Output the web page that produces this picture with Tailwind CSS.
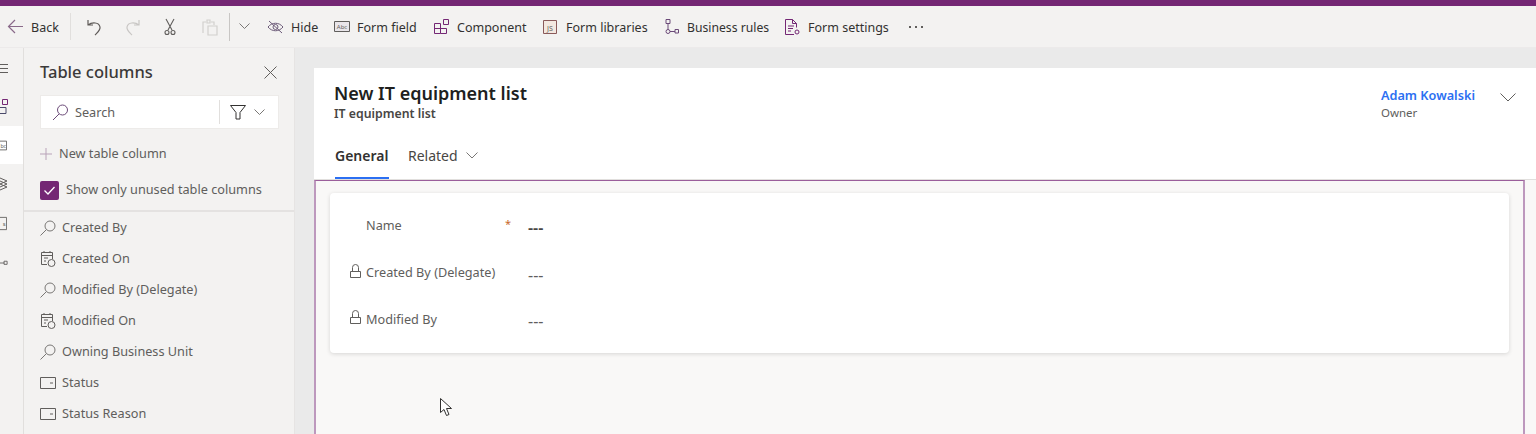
<!DOCTYPE html>
<html lang="en">
<head>
  <meta charset="UTF-8" />
  <title>New IT equipment list</title>
  <script src="https://cdn.jsdelivr.net/npm/@tailwindcss/browser@4"></script>
</head>
<body class="h-[434px] overflow-hidden bg-[#f3f2f1] font-['Noto_Sans',sans-serif] text-[12.7px] text-[#323130]">
  <div class="h-[6px] bg-[#742774]"></div>

  <!-- command bar -->
  <div class="h-[42px] flex items-center bg-[#f3f2f1] border-b border-[#eceaea] text-[12.5px] whitespace-nowrap">
    <svg class="ml-[7px] w-[17px] h-[17px]" viewBox="0 0 17 17" fill="none" stroke="#8a6a8a" stroke-width="1.2"><path d="M16 8.500H1.500M8 2L1.500 8.500 8 15"/></svg>
    <span class="ml-[7px] w-[27px] pt-[3px]">Back</span>
    <div class="ml-[12px] w-px h-[27px] bg-[#e1dfdd]"></div>
    <svg class="ml-[15px] w-[16px] h-[18px]" viewBox="0 0 16 18" fill="none" stroke="#5e5a58" stroke-width="1.2"><path d="M2 2v5h5M2 7c4-3 11-3 12 2 .6 3-2 5-5 8"/></svg>
    <svg class="ml-[23px] w-[16px] h-[18px]" viewBox="0 0 16 18" fill="none" stroke="#c8c6c4" stroke-width="1.2"><path d="M14 2v5H9M14 7C10 4 3 4 2 9c-.6 3 2 5 5 8"/></svg>
    <svg class="ml-[23px] w-[12px] h-[18px]" viewBox="0 0 12 18" fill="none" stroke="#605e5c" stroke-width="1.1"><path d="M2 1l6 11M10 1L4 12"/><circle cx="3" cy="14.500" r="2"/><circle cx="9" cy="14.500" r="2"/></svg>
    <svg class="ml-[26px] w-[16px] h-[18px]" viewBox="0 0 16 18" fill="none" stroke="#d2d0ce" stroke-width="1.2"><path d="M1 15V4h3M12 7V4H9M5 2h3v3H5zM6 8h9v9H6z"/></svg>
    <div class="ml-[11px] w-px h-[28px] bg-[#c8c6c4]"></div>
    <svg class="ml-[9px] w-[11px] h-[7px]" viewBox="0 0 11 7" fill="none" stroke="#797775" stroke-width="1"><path d="M.5.500l5 5 5-5"/></svg>

    <svg class="ml-[17px] w-[17px] h-[14px]" viewBox="0 0 17 14" fill="none" stroke="#6b5a78" stroke-width="1"><path d="M1 7c4-5 11-5 15 0-4 5-11 5-15 0zM2 1l13 12"/><circle cx="8.500" cy="7" r="2.500"/></svg>
    <span class="ml-[7px] w-[28px] pt-[3px]">Hide</span>
    <svg class="ml-[15px] w-[16px] h-[11px]" viewBox="0 0 16 11" fill="#e9e6ea" stroke="#605e5c" stroke-width="1"><path d="M.5.500h15v10H.5z"/><text x="8" y="7.500" font-size="6" text-anchor="middle" stroke="none" fill="#605e5c" font-family="Noto Sans">Abc</text></svg>
    <span class="ml-[7px] w-[61px] pt-[3px]">Form field</span>
    <svg class="ml-[16px] w-[15px] h-[15px]" viewBox="0 0 15 15" fill="none" stroke="#742774" stroke-width="1"><path d="M.5 4.500h6v10h-6zM.5 9.500h12v5h-6M9.500.500h5v5h-5z"/></svg>
    <span class="ml-[8px] w-[70px] pt-[3px]">Component</span>
    <svg class="ml-[16px] w-[14px] h-[14px]" viewBox="0 0 14 14" fill="#f3e8e0" stroke="#8a5a5a" stroke-width="1"><path d="M.5.500h13v13H.5z"/><text x="7" y="11" font-size="7" text-anchor="middle" stroke="none" fill="#605e5c" font-family="Noto Sans">JS</text></svg>
    <span class="ml-[9px] w-[82px] pt-[3px]">Form libraries</span>
    <svg class="ml-[16px] w-[15px] h-[15px]" viewBox="0 0 15 15" fill="none" stroke="#6b4a78" stroke-width="1"><path d="M2 .5h4v4H2zM4 4.500v6M6 12.500h5M11 10.500h3.500v3.500H11z"/><circle cx="4" cy="12.500" r="2"/></svg>
    <span class="ml-[8px] w-[82px] pt-[3px] text-[12.2px]">Business rules</span>
    <svg class="ml-[16px] w-[15px] h-[16px]" viewBox="0 0 15 16" fill="none" stroke="#742774" stroke-width="1"><path d="M9 15.500H.5V.500h7l4 4v4M7.500.500v4h4M3 7h6M3 9.500h5M3 12h3"/><circle cx="12" cy="13" r="2"/></svg>
    <span class="ml-[8px] w-[81px] pt-[3px]">Form settings</span>
    <span class="ml-[20px] flex gap-[4px] items-center">
      <i class="w-[2px] h-[2px] bg-[#605e5c]"></i><i class="w-[2px] h-[2px] bg-[#605e5c]"></i><i class="w-[2px] h-[2px] bg-[#605e5c]"></i>
    </span>
  </div>

  <div class="flex h-[386px]">
    <!-- rail, clipped at the left edge of the shot -->
    <div class="w-[24px] shrink-0 border-r border-[#e1dfdd] flex flex-col items-end">
      <div class="h-[39px] w-full flex items-center justify-end pr-[15px]">
        <svg class="w-[8px] h-[9px] mt-[2px]" viewBox="0 0 8 9" stroke="#605e5c"><path d="M0 .5h8M0 4.500h8M0 8.500h8"/></svg>
      </div>
      <div class="h-[39px] w-full flex items-center pr-[15px] justify-end">
        <svg class="w-[8px] h-[15px]" viewBox="0 0 8 15" fill="none" stroke="#4a4a6a"><path d="M0 8.500h6v6H0"/><path d="M2.500 .5h5v5h-5z" stroke="#742774"/></svg>
      </div>
      <div class="h-[38px] w-full bg-white flex items-center justify-end pr-[16px]">
        <svg class="w-[8px] h-[11px]" viewBox="0 0 8 11" fill="none" stroke="#605e5c"><path d="M0 .5h7.500v10H0"/><text x="7" y="8" font-size="6" text-anchor="end" stroke="none" fill="#605e5c" font-family="Noto Sans">bc</text></svg>
      </div>
      <div class="h-[40px] w-full flex items-center justify-end pr-[15px]">
        <svg class="w-[8px] h-[14px]" viewBox="0 0 8 14" fill="none" stroke="#605e5c"><path d="M0 1l7 3-7 3M0 4l7 3-7 3M0 7l7 3-7 3"/></svg>
      </div>
      <div class="h-[38px] w-full flex items-center justify-end pr-[16px]">
        <svg class="w-[8px] h-[15px]" viewBox="0 0 8 15" fill="none" stroke="#605e5c"><path d="M0 .5h7.500v14H0"/><text x="6.500" y="10" font-size="7" text-anchor="end" stroke="none" fill="#605e5c" font-family="Noto Sans">s</text></svg>
      </div>
      <div class="h-[42px] w-full flex items-center justify-end pr-[15px]">
        <svg class="w-[9px] h-[6px]" viewBox="0 0 9 6" fill="none" stroke="#605e5c"><path d="M0 3h5"/><path d="M4.500 1h3.500v3.500H4.500z"/></svg>
      </div>
    </div>

    <!-- table columns panel -->
    <div class="w-[271px] shrink-0 border-r border-[#e6e4e3] bg-[#f3f2f1]">
      <div class="h-[47px] pt-[1px] pl-[16px] pr-[17px] flex items-center justify-between">
        <span class="text-[16.500px] font-medium text-[#3b3a39]">Table columns</span>
        <svg class="w-[13px] h-[13px]" viewBox="0 0 13 13" stroke="#605e5c"><path d="M.5.500l12 12M12.500.500l-12 12"/></svg>
      </div>
      <div class="ml-[16px] w-[239px] h-[34px] bg-white border border-[#edebe9] flex items-center">
        <svg class="ml-[11px] w-[17px] h-[17px]" viewBox="0 0 17 17" fill="none" stroke="#6b4a78"><circle cx="10.500" cy="6" r="5"/><path d="M7 10l-6 6"/></svg>
        <span class="ml-[6px] w-[41px] pt-[2px] text-[#605e5c]">Search</span>
        <div class="ml-[103px] w-px h-[24px] bg-[#e1dfdd]"></div>
        <svg class="ml-[10px] w-[16px] h-[15px]" viewBox="0 0 16 15" fill="none" stroke="#323130"><path d="M.5.500h15L10 7.500v6.500H6V7.500z"/></svg>
        <svg class="ml-[8px] w-[11px] h-[7px]" viewBox="0 0 11 7" fill="none" stroke="#797775"><path d="M.5.500l5 5 5-5"/></svg>
      </div>
      <div class="ml-[16px] mt-[12px] h-[26px] flex items-center text-[#605e5c]">
        <svg class="w-[12px] h-[12px]" viewBox="0 0 12 12" stroke="#b9a3b9"><path d="M6 0v12M0 6h12"/></svg>
        <span class="ml-[7px]">New table column</span>
      </div>
      <div class="ml-[16px] mt-[12px] h-[22px] flex items-center text-[#605e5c]">
        <span class="w-[19px] h-[19px] rounded-[2px] bg-[#742774] flex items-center justify-center">
          <svg class="w-[11px] h-[9px]" viewBox="0 0 11 9" fill="none" stroke="#fff" stroke-width="1.300"><path d="M.5 4.500L4 8l6.500-7"/></svg>
        </span>
        <span class="ml-[7px]">Show only unused table columns</span>
      </div>
      <div class="mt-[9px] border-t-2 border-[#e4e2e1]">
        <div class="h-[31px] pl-[16px] flex items-center text-[#605e5c]">
          <svg class="w-[16px] h-[16px] shrink-0" viewBox="0 0 16 16" fill="none" stroke="#797775"><circle cx="10" cy="6" r="5"/><path d="M6.500 9.500L.5 15.500"/></svg>
          <span class="ml-[6px]">Created By</span>
        </div>
        <div class="h-[31px] pl-[16px] flex items-center text-[#605e5c]">
          <svg class="w-[16px] h-[16px] shrink-0" viewBox="0 0 16 16" fill="none" stroke="#605e5c"><path d="M7 13.500H1.500v-12h11V8M1.500 4.500h11M4 0v2M10 0v2M4 7h4M4 10h2"/><circle cx="11.500" cy="12" r="3.500"/></svg>
          <span class="ml-[6px]">Created On</span>
        </div>
        <div class="h-[31px] pl-[16px] flex items-center text-[#605e5c]">
          <svg class="w-[16px] h-[16px] shrink-0" viewBox="0 0 16 16" fill="none" stroke="#797775"><circle cx="10" cy="6" r="5"/><path d="M6.500 9.500L.5 15.500"/></svg>
          <span class="ml-[6px]">Modified By (Delegate)</span>
        </div>
        <div class="h-[31px] pl-[16px] flex items-center text-[#605e5c]">
          <svg class="w-[16px] h-[16px] shrink-0" viewBox="0 0 16 16" fill="none" stroke="#605e5c"><path d="M7 13.500H1.500v-12h11V8M1.500 4.500h11M4 0v2M10 0v2M4 7h4M4 10h2"/><circle cx="11.500" cy="12" r="3.500"/></svg>
          <span class="ml-[6px]">Modified On</span>
        </div>
        <div class="h-[31px] pl-[16px] flex items-center text-[#605e5c]">
          <svg class="w-[16px] h-[16px] shrink-0" viewBox="0 0 16 16" fill="none" stroke="#797775"><circle cx="10" cy="6" r="5"/><path d="M6.500 9.500L.5 15.500"/></svg>
          <span class="ml-[6px]">Owning Business Unit</span>
        </div>
        <div class="h-[31px] pl-[16px] flex items-center text-[#605e5c]">
          <svg class="w-[16px] h-[12px] shrink-0" viewBox="0 0 16 12" fill="none" stroke="#605e5c"><path d="M.5.500h15v11H.5zM10 6h3"/></svg>
          <span class="ml-[6px]">Status</span>
        </div>
        <div class="h-[31px] pl-[16px] flex items-center text-[#605e5c]">
          <svg class="w-[16px] h-[12px] shrink-0" viewBox="0 0 16 12" fill="none" stroke="#605e5c"><path d="M.5.500h15v11H.5zM10 6h3"/></svg>
          <span class="ml-[6px]">Status Reason</span>
        </div>
      </div>
    </div>

    <!-- form canvas -->
    <div class="flex-1 min-w-0 bg-[#eaeaea] pt-[20px] pl-[19px]">
      <div class="h-[366px] bg-[#f9f8f7]">
        <div class="h-[112px] bg-white pl-[20px] pr-[20px] border-b border-[#e1dfdd] relative">
          <div class="flex justify-between pt-[13px]">
            <div>
              <div class="text-[18px] leading-[25px] font-semibold text-[#201f1e]">New IT equipment list</div>
              <div class="text-[12.300px] leading-[15px] font-semibold text-[#484644]">IT equipment list</div>
            </div>
            <div class="flex gap-[25px] pt-[5px]">
              <div>
                <div class="text-[12.700px] leading-[18px] font-semibold text-[#2b6ff2]">Adam Kowalski</div>
                <div class="text-[11.500px] leading-[18px] text-[#605e5c]">Owner</div>
              </div>
              <svg class="w-[16px] h-[9px] mt-[7px]" viewBox="0 0 16 9" fill="none" stroke="#605e5c"><path d="M.5.500L8 8 15.500.500"/></svg>
            </div>
          </div>
          <div class="absolute left-[21px] bottom-0 flex">
            <div class="h-[44px] pb-[2px] flex items-center font-semibold text-[14px] border-b-2 border-[#2b6ff2] w-[54px]">General</div>
            <div class="ml-[19px] h-[44px] pb-[4px] flex items-center text-[14px] text-[#484644]">Related
              <svg class="ml-[8px] w-[12px] h-[7px]" viewBox="0 0 12 7" fill="none" stroke="#797775"><path d="M.5.500l5.500 5.500 5.500-5.500"/></svg>
            </div>
          </div>
        </div>
        <div class="w-[1211px] h-[254px] border-t border-t-[#9b5f9b] border-x-2 border-x-[#bd98bd] pt-[12px] pl-[14px]">
          <div class="w-[1179px] h-[160px] bg-white rounded-[4px] shadow-[0_1px_4px_rgba(0,0,0,0.14)] pl-[20px] pt-[11px] relative">
            <div class="h-[47px] flex items-center">
              <span class="ml-[16px] w-[139px] pb-[4px] text-[#605e5c]">Name</span>
              <span class="text-[#c8692a] text-[11px] w-[23px] pb-[6px]">*</span>
              <span class="font-semibold text-[16px] leading-[20px] text-[#484644]">---</span>
            </div>
            <div class="h-[47px] flex items-center">
              <svg class="w-[11px] h-[14px] mb-[7px]" viewBox="0 0 11 14" fill="none" stroke="#605e5c"><path d="M.5 7.500h10v6H.5zM2.500 7.500V3.500a3 3 0 0 1 6 0v4"/></svg>
              <span class="ml-[5px] w-[162px] pb-[4px] text-[#605e5c]">Created By (Delegate)</span>
              <span class="text-[16px] leading-[20px] text-[#605e5c]">---</span>
            </div>
            <div class="h-[46px] flex items-center">
              <svg class="w-[11px] h-[14px] mb-[8px]" viewBox="0 0 11 14" fill="none" stroke="#605e5c"><path d="M.5 7.500h10v6H.5zM2.500 7.500V3.500a3 3 0 0 1 6 0v4"/></svg>
              <span class="ml-[5px] w-[162px] pb-[2px] text-[#605e5c]">Modified By</span>
              <span class="text-[16px] leading-[20px] text-[#605e5c]">---</span>
            </div>
          </div>
        </div>
      </div>
    </div>
  </div>

  <!-- mouse pointer in the screenshot -->
  <svg class="absolute left-[440px] top-[398px] w-[13px] h-[19px]" viewBox="0 0 13 19" fill="#fff" stroke="#323130"><path d="M.5.500v14l3.500-3 2.500 6 2.500-1-2.500-6h5z"/></svg>
</body>
</html>
